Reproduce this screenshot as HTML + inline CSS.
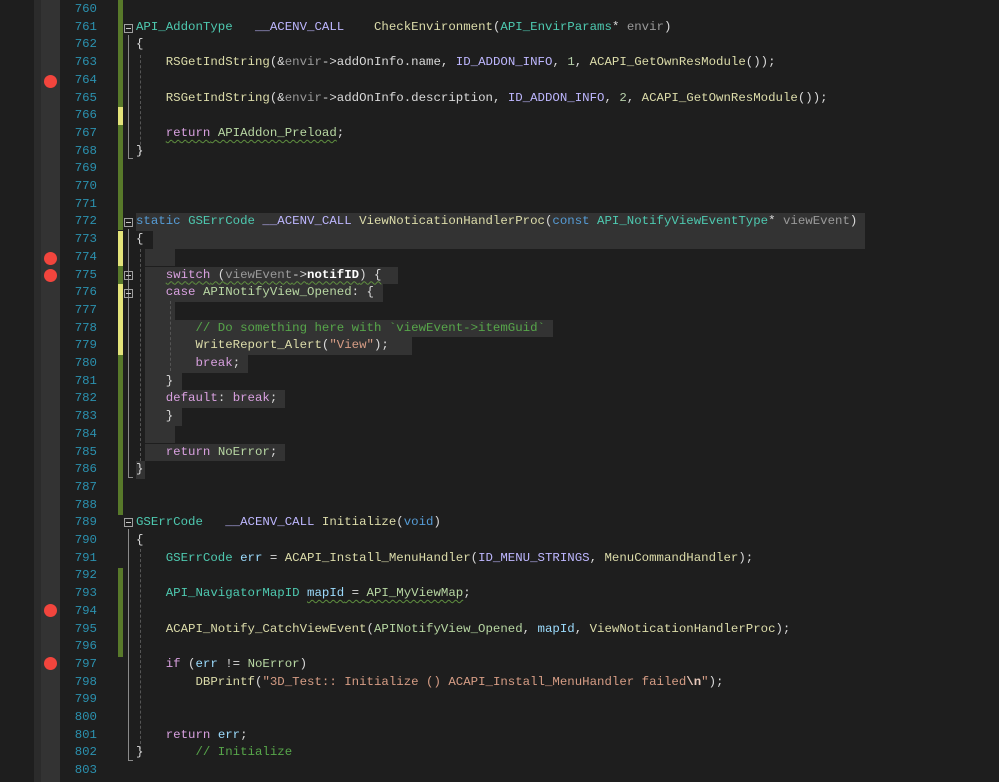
<!DOCTYPE html>
<html><head><meta charset="utf-8"><style>
html,body{margin:0;padding:0;background:#1e1e1e;width:999px;height:782px;overflow:hidden;position:relative;font-family:"Liberation Mono",monospace;font-size:12.4px}
.g1{position:absolute;left:34px;top:0;width:7px;height:782px;background:#2b2b2b}
.g2{position:absolute;left:41px;top:0;width:19px;height:782px;background:#333333}
.ln{position:absolute;left:60px;width:37px;text-align:right;color:#2b91af;height:17.7px;line-height:17.7px}
.cd{position:absolute;left:136px;white-space:pre;color:#dadada;height:17.7px;line-height:17.7px}
.hl{position:absolute;background:#333333;height:17.7px}
.bar{position:absolute;left:118px;width:5px}
.bp{position:absolute;left:44px;width:13px;height:13px;border-radius:50%;background:#f2453d}
.fb{position:absolute;left:124px;width:7px;height:7px;border:1px solid #a0a0a0;box-sizing:content-box}
.fb:after{content:"";position:absolute;left:1px;top:3px;width:5px;height:1px;background:#c8c8c8}
.vl{position:absolute;left:128px;width:1px;background:#8a8a8a}
.dl{position:absolute;width:0;border-left:1px dashed #555}
.t{color:#4ec9b0}.f{color:#dcdcaa}.k{color:#569cd6}.c{color:#d8a0df}.m{color:#beb7ff}.p{color:#9a9a9a}
.n{color:#b5cea8}.e{color:#b8d7a3}.v{color:#9cdcfe}.s{color:#d69d85}.cm{color:#57a64a}.b{font-weight:bold;color:#fff}
.w{text-decoration:underline wavy #5f8f3f;text-decoration-thickness:1px;text-underline-offset:3px}
</style></head><body>
<div class="g1"></div><div class="g2"></div>
<div class="bar" style="top:0;height:230px;background:#58792a"></div>
<div class="bar" style="top:107px;height:18px;background:#e4e47a"></div>
<div class="bar" style="top:231px;height:35px;background:#e4e47a"></div>
<div class="bar" style="top:266px;height:18px;background:#58792a"></div>
<div class="bar" style="top:284px;height:71px;background:#e4e47a"></div>
<div class="bar" style="top:355px;height:160px;background:#58792a"></div>
<div class="bar" style="top:568px;height:89px;background:#58792a"></div>
<div class="hl" style="left:136px;width:729px;top:213.4px"></div>
<div class="hl" style="left:153px;width:712px;top:231.1px"></div>
<div class="hl" style="left:145px;width:30px;top:248.8px"></div>
<div class="hl" style="left:145px;width:253px;top:266.5px"></div>
<div class="hl" style="left:145px;width:238px;top:284.2px"></div>
<div class="hl" style="left:145px;width:30px;top:301.9px"></div>
<div class="hl" style="left:145px;width:408px;top:319.6px"></div>
<div class="hl" style="left:145px;width:267px;top:337.3px"></div>
<div class="hl" style="left:145px;width:103px;top:355px"></div>
<div class="hl" style="left:145px;width:37px;top:372.7px"></div>
<div class="hl" style="left:145px;width:140px;top:390.4px"></div>
<div class="hl" style="left:145px;width:37px;top:408.1px"></div>
<div class="hl" style="left:145px;width:30px;top:425.8px"></div>
<div class="hl" style="left:145px;width:140px;top:443.5px"></div>
<div class="hl" style="left:136px;width:9px;top:461.2px"></div>
<div class="bp" style="top:75px"></div>
<div class="bp" style="top:252px"></div>
<div class="bp" style="top:269px"></div>
<div class="bp" style="top:604px"></div>
<div class="bp" style="top:657px"></div>
<div class="fb" style="top:24px"></div>
<div class="vl" style="top:35px;height:124px"></div><div style="position:absolute;left:128px;top:158px;width:5px;height:1px;background:#8a8a8a"></div>
<div class="fb" style="top:218px"></div>
<div class="vl" style="top:229px;height:248px"></div><div style="position:absolute;left:128px;top:477px;width:5px;height:1px;background:#8a8a8a"></div>
<div class="fb" style="top:271px"></div>
<div class="fb" style="top:289px"></div>
<div class="fb" style="top:518px"></div>
<div class="vl" style="top:529px;height:231px"></div><div style="position:absolute;left:128px;top:760px;width:5px;height:1px;background:#8a8a8a"></div>
<div class="dl" style="left:140px;top:55px;height:100px"></div>
<div class="dl" style="left:140px;top:249px;height:212px"></div>
<div class="dl" style="left:170px;top:301px;height:70px"></div>
<div class="dl" style="left:140px;top:549px;height:200px"></div>

<div class="ln" style="top:1px">760</div>
<div class="ln" style="top:18.7px">761</div><div class="cd" style="top:18.7px"><span class="t">API_AddonType</span>   <span class="m">__ACENV_CALL</span>    <span class="f">CheckEnvironment</span>(<span class="t">API_EnvirParams</span>* <span class="p">envir</span>)</div>
<div class="ln" style="top:36.4px">762</div><div class="cd" style="top:36.4px">{</div>
<div class="ln" style="top:54.1px">763</div><div class="cd" style="top:54.1px">    <span class="f">RSGetIndString</span>(&amp;<span class="p">envir</span>-&gt;addOnInfo.name, <span class="m">ID_ADDON_INFO</span>, <span class="n">1</span>, <span class="f">ACAPI_GetOwnResModule</span>());</div>
<div class="ln" style="top:71.8px">764</div>
<div class="ln" style="top:89.5px">765</div><div class="cd" style="top:89.5px">    <span class="f">RSGetIndString</span>(&amp;<span class="p">envir</span>-&gt;addOnInfo.description, <span class="m">ID_ADDON_INFO</span>, <span class="n">2</span>, <span class="f">ACAPI_GetOwnResModule</span>());</div>
<div class="ln" style="top:107.2px">766</div>
<div class="ln" style="top:124.9px">767</div><div class="cd" style="top:124.9px">    <span class="w"><span class="c">return</span> <span class="e">APIAddon_Preload</span></span>;</div>
<div class="ln" style="top:142.6px">768</div><div class="cd" style="top:142.6px">}</div>
<div class="ln" style="top:160.3px">769</div>
<div class="ln" style="top:178px">770</div>
<div class="ln" style="top:195.7px">771</div>
<div class="ln" style="top:213.4px">772</div><div class="cd" style="top:213.4px"><span class="k">static</span> <span class="t">GSErrCode</span> <span class="m">__ACENV_CALL</span> <span class="f">ViewNoticationHandlerProc</span>(<span class="k">const</span> <span class="t">API_NotifyViewEventType</span>* <span class="p">viewEvent</span>)</div>
<div class="ln" style="top:231.1px">773</div><div class="cd" style="top:231.1px">{</div>
<div class="ln" style="top:248.8px">774</div>
<div class="ln" style="top:266.5px">775</div><div class="cd" style="top:266.5px">    <span class="w"><span class="c">switch</span> (<span class="p">viewEvent</span>-&gt;<span class="b">notifID</span>) {</span></div>
<div class="ln" style="top:284.2px">776</div><div class="cd" style="top:284.2px">    <span class="c">case</span> <span class="e">APINotifyView_Opened</span>: {</div>
<div class="ln" style="top:301.9px">777</div>
<div class="ln" style="top:319.6px">778</div><div class="cd" style="top:319.6px">        <span class="cm">// Do something here with `viewEvent-&gt;itemGuid`</span></div>
<div class="ln" style="top:337.3px">779</div><div class="cd" style="top:337.3px">        <span class="f">WriteReport_Alert</span>(<span class="s">"View"</span>);</div>
<div class="ln" style="top:355px">780</div><div class="cd" style="top:355px">        <span class="c">break</span>;</div>
<div class="ln" style="top:372.7px">781</div><div class="cd" style="top:372.7px">    }</div>
<div class="ln" style="top:390.4px">782</div><div class="cd" style="top:390.4px">    <span class="c">default</span>: <span class="c">break</span>;</div>
<div class="ln" style="top:408.1px">783</div><div class="cd" style="top:408.1px">    }</div>
<div class="ln" style="top:425.8px">784</div>
<div class="ln" style="top:443.5px">785</div><div class="cd" style="top:443.5px">    <span class="c">return</span> <span class="e">NoError</span>;</div>
<div class="ln" style="top:461.2px">786</div><div class="cd" style="top:461.2px">}</div>
<div class="ln" style="top:478.9px">787</div>
<div class="ln" style="top:496.6px">788</div>
<div class="ln" style="top:514.3px">789</div><div class="cd" style="top:514.3px"><span class="t">GSErrCode</span>   <span class="m">__ACENV_CALL</span> <span class="f">Initialize</span>(<span class="k">void</span>)</div>
<div class="ln" style="top:532px">790</div><div class="cd" style="top:532px">{</div>
<div class="ln" style="top:549.7px">791</div><div class="cd" style="top:549.7px">    <span class="t">GSErrCode</span> <span class="v">err</span> = <span class="f">ACAPI_Install_MenuHandler</span>(<span class="m">ID_MENU_STRINGS</span>, <span class="f">MenuCommandHandler</span>);</div>
<div class="ln" style="top:567.4px">792</div>
<div class="ln" style="top:585.1px">793</div><div class="cd" style="top:585.1px">    <span class="t">API_NavigatorMapID</span> <span class="w"><span class="v">mapId</span> = <span class="e">API_MyViewMap</span></span>;</div>
<div class="ln" style="top:602.8px">794</div>
<div class="ln" style="top:620.5px">795</div><div class="cd" style="top:620.5px">    <span class="f">ACAPI_Notify_CatchViewEvent</span>(<span class="e">APINotifyView_Opened</span>, <span class="v">mapId</span>, <span class="f">ViewNoticationHandlerProc</span>);</div>
<div class="ln" style="top:638.2px">796</div>
<div class="ln" style="top:655.9px">797</div><div class="cd" style="top:655.9px">    <span class="c">if</span> (<span class="v">err</span> != <span class="e">NoError</span>)</div>
<div class="ln" style="top:673.6px">798</div><div class="cd" style="top:673.6px">        <span class="f">DBPrintf</span>(<span class="s">"3D_Test:: Initialize () ACAPI_Install_MenuHandler failed</span><span class="b" style="color:#e8c9bb">\n</span><span class="s">"</span>);</div>
<div class="ln" style="top:691.3px">799</div>
<div class="ln" style="top:709px">800</div>
<div class="ln" style="top:726.7px">801</div><div class="cd" style="top:726.7px">    <span class="c">return</span> <span class="v">err</span>;</div>
<div class="ln" style="top:744.4px">802</div><div class="cd" style="top:744.4px">}       <span class="cm">// Initialize</span></div>
<div class="ln" style="top:762.1px">803</div>
</body></html>
